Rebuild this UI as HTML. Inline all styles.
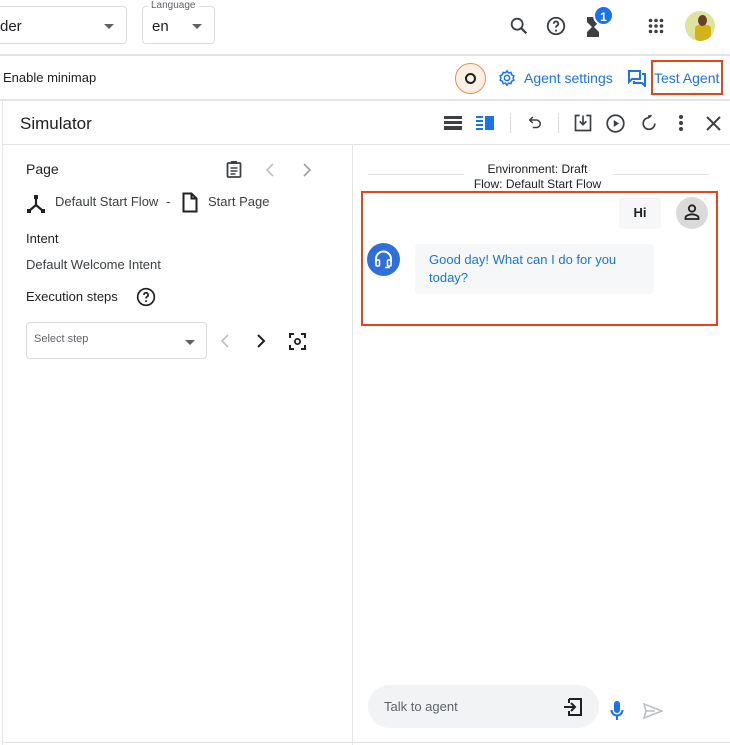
<!DOCTYPE html>
<html><head><style>
*{box-sizing:border-box;margin:0;padding:0}
body{width:730px;height:745px;background:#fff;font-family:"Liberation Sans",Arial,sans-serif;color:#202124;position:relative;overflow:hidden}
.a{position:absolute}
svg{display:block}
</style></head><body>
<!-- top bar -->
<div class="a" style="left:-10px;top:6px;width:137px;height:38px;border:1px solid #dadce0;border-radius:4px"></div>
<div class="a" style="left:0;top:18px;font-size:15px">der</div>
<div class="a" style="left:104px;top:24px;border-left:5px solid transparent;border-right:5px solid transparent;border-top:5px solid #5f6368"></div>
<div class="a" style="left:142px;top:6px;width:73px;height:38px;border:1px solid #dadce0;border-radius:4px"></div>
<div class="a" style="left:148px;top:0;background:#fff;padding:0 3px;font-size:10px;color:#5f6368">Language</div>
<div class="a" style="left:152px;top:18px;font-size:15px">en</div>
<div class="a" style="left:192px;top:24px;border-left:5px solid transparent;border-right:5px solid transparent;border-top:5px solid #5f6368"></div>
<svg class="a" style="left:508px;top:15px" width="22" height="22" viewBox="0 0 24 24"><circle cx="10" cy="10" r="6" fill="none" stroke="#3c4043" stroke-width="2"/><path d="M14.5 14.5L20 20" stroke="#3c4043" stroke-width="2.4"/></svg>
<svg class="a" style="left:545px;top:15px" width="22" height="22" viewBox="0 0 24 24"><circle cx="12" cy="12" r="9" fill="none" stroke="#3c4043" stroke-width="2"/><path d="M9.5 9.5a2.5 2.5 0 1 1 3.5 2.3c-.8.4-1 1-1 2" fill="none" stroke="#3c4043" stroke-width="2"/><circle cx="12" cy="17" r="1.2" fill="#3c4043"/></svg>
<svg class="a" style="left:585px;top:16px" width="16" height="22" viewBox="0 0 16 22"><path d="M2 1h12v5l-5 5 5 5v5H2v-5l5-5-5-5z" fill="#3c4043"/></svg>
<div class="a" style="left:593px;top:5px;width:21px;height:21px;border-radius:50%;background:#1a73e8;color:#fff;font-size:12px;font-weight:bold;text-align:center;line-height:21px;border:2px solid #fff">1</div>
<svg class="a" style="left:648px;top:18px" width="16" height="16" viewBox="0 0 16 16" fill="#3c4043"><circle cx="2.5" cy="2.5" r="1.8"/><circle cx="8" cy="2.5" r="1.8"/><circle cx="13.5" cy="2.5" r="1.8"/><circle cx="2.5" cy="8" r="1.8"/><circle cx="8" cy="8" r="1.8"/><circle cx="13.5" cy="8" r="1.8"/><circle cx="2.5" cy="13.5" r="1.8"/><circle cx="8" cy="13.5" r="1.8"/><circle cx="13.5" cy="13.5" r="1.8"/></svg>
<div class="a" style="left:685px;top:11px;width:30px;height:30px;border-radius:50%;background:#dfe3a0;overflow:hidden"><div style="position:absolute;left:10px;top:14px;width:16px;height:16px;background:#d4b21a;border-radius:4px"></div><div style="position:absolute;left:13px;top:4px;width:9px;height:11px;background:#6b3f2a;border-radius:50%"></div></div>
<div class="a" style="left:0;top:54px;width:730px;height:2px;background:#e3e3e3"></div>
<!-- second bar -->
<div class="a" style="left:3px;top:70px;font-size:13px">Enable minimap</div>
<div class="a" style="left:455px;top:63px;width:31px;height:31px;border-radius:50%;border:1.5px solid #e8914f;background:#fcefe4"></div>
<div class="a" style="left:465px;top:73px;width:11px;height:11px;border-radius:50%;border:2px solid #202124"></div>
<svg class="a" style="left:498px;top:69px" width="18" height="18" viewBox="0 0 24 24"><circle cx="12" cy="12" r="3.5" fill="none" stroke="#1a73e8" stroke-width="2"/><path d="M12 2.5l2 2.6 3.2-.6.9 3.1 3 1.4-1 3 1 3-3 1.4-.9 3.1-3.2-.6-2 2.6-2-2.6-3.2.6-.9-3.1-3-1.4 1-3-1-3 3-1.4.9-3.1 3.2.6z" fill="none" stroke="#1a73e8" stroke-width="2"/></svg>
<div class="a" style="left:524px;top:70px;font-size:14px;color:#1a73e8">Agent settings</div>
<svg class="a" style="left:628px;top:70px" width="18" height="17" viewBox="0 0 18 17"><path d="M1 1h11v8H4l-3 3z" fill="none" stroke="#1a73e8" stroke-width="2"/><path d="M14 4h3v12l-3-3H6v-2" fill="none" stroke="#1a73e8" stroke-width="2"/></svg>
<div class="a" style="left:651px;top:60px;width:72px;height:35px;border:2px solid #e8431b"></div>
<div class="a" style="left:654px;top:70px;font-size:14px;color:#1a73e8">Test Agent</div>
<div class="a" style="left:0;top:99px;width:730px;height:2px;background:#e3e3e3"></div>
<!-- simulator -->
<div class="a" style="left:2px;top:101px;width:1px;height:644px;background:#e3e3e3"></div>
<div class="a" style="left:20px;top:114px;font-size:17px">Simulator</div>
<svg class="a" style="left:444px;top:116px" width="18" height="14" viewBox="0 0 18 14" fill="#3c4043"><rect y="0" width="18" height="3"/><rect y="5" width="18" height="3"/><rect y="10" width="18" height="4"/></svg>
<svg class="a" style="left:476px;top:116px" width="18" height="14" viewBox="0 0 18 14" fill="#1a73e8"><rect y="0" width="7" height="2"/><rect y="4" width="7" height="2"/><rect y="8" width="7" height="2"/><rect y="12" width="7" height="2"/><rect x="9" y="0" width="9" height="14"/></svg>
<div class="a" style="left:510px;top:113px;width:1px;height:20px;background:#ddd"></div>
<svg class="a" style="left:526px;top:114px" width="18" height="18" viewBox="0 0 24 24"><path d="M9 4L5 8l4 4M5 8h9a5 5 0 0 1 0 10H9" fill="none" stroke="#3c4043" stroke-width="2"/></svg>
<div class="a" style="left:558px;top:113px;width:1px;height:20px;background:#ddd"></div>
<svg class="a" style="left:573px;top:113px" width="20" height="20" viewBox="0 0 24 24"><path d="M8 3H3v18h18V3h-5" fill="none" stroke="#3c4043" stroke-width="2"/><path d="M12 3v11M8 10l4 4 4-4" fill="none" stroke="#3c4043" stroke-width="2"/></svg>
<svg class="a" style="left:605px;top:113px" width="21" height="21" viewBox="0 0 24 24"><circle cx="12" cy="12" r="9.5" fill="none" stroke="#3c4043" stroke-width="2"/><path d="M10 8v8l6-4z" fill="#3c4043"/></svg>
<svg class="a" style="left:639px;top:113px" width="20" height="21" viewBox="0 0 24 24"><path d="M12 5a7 7 0 1 0 7 7M12 5l3-3M12 5V2" fill="none" stroke="#3c4043" stroke-width="2"/><path d="M12 5a7 7 0 0 1 0 0" /></svg>
<svg class="a" style="left:678px;top:114px" width="6" height="18" viewBox="0 0 6 18" fill="#3c4043"><circle cx="3" cy="3" r="2"/><circle cx="3" cy="9" r="2"/><circle cx="3" cy="15" r="2"/></svg>
<svg class="a" style="left:706px;top:116px" width="15" height="15" viewBox="0 0 15 15"><path d="M1 1l13 13M14 1L1 14" stroke="#3c4043" stroke-width="2"/></svg>
<div class="a" style="left:3px;top:144px;width:727px;height:1px;background:#e3e3e3"></div>
<div class="a" style="left:352px;top:145px;width:1px;height:600px;background:#e3e3e3"></div>
<!-- left -->
<div class="a" style="left:26px;top:161px;font-size:14px;font-weight:500">Page</div>
<svg class="a" style="left:226px;top:160px" width="16" height="18" viewBox="0 0 16 18"><rect x="1.5" y="3" width="13" height="14" rx="1" fill="none" stroke="#3c4043" stroke-width="1.8"/><rect x="5" y="1" width="6" height="3" fill="#3c4043"/><path d="M4.5 8h7M4.5 11h7M4.5 14h5" stroke="#3c4043" stroke-width="1.5"/></svg>
<svg class="a" style="left:265px;top:163px" width="10" height="14" viewBox="0 0 10 14"><path d="M8 1L2 7l6 6" fill="none" stroke="#bdc1c6" stroke-width="1.6"/></svg>
<svg class="a" style="left:302px;top:163px" width="10" height="14" viewBox="0 0 10 14"><path d="M2 1l6 6-6 6" fill="none" stroke="#9aa0a6" stroke-width="1.6"/></svg>
<svg class="a" style="left:26px;top:194px" width="20" height="20" viewBox="0 0 20 20"><path d="M10 3v8L3 17M10 11l7 6" fill="none" stroke="#202124" stroke-width="2.2"/><rect x="8" y="1" width="4" height="4" fill="#202124"/><rect x="1" y="15" width="4" height="4" fill="#202124"/><rect x="15" y="15" width="4" height="4" fill="#202124"/></svg>
<div class="a" style="left:55px;top:194px;font-size:13px;color:#3c4043">Default Start Flow</div>
<div class="a" style="left:166px;top:194px;font-size:13px;color:#3c4043">-</div>
<svg class="a" style="left:182px;top:192px" width="16" height="21" viewBox="0 0 16 21"><path d="M1.5 1.5h8l5 5v13h-13z" fill="none" stroke="#202124" stroke-width="2"/><path d="M9.5 1.5v5h5" fill="none" stroke="#202124" stroke-width="2"/></svg>
<div class="a" style="left:208px;top:194px;font-size:13px;color:#3c4043">Start Page</div>
<div class="a" style="left:26px;top:231px;font-size:13px;font-weight:500">Intent</div>
<div class="a" style="left:26px;top:257px;font-size:13px;color:#3c4043">Default Welcome Intent</div>
<div class="a" style="left:26px;top:289px;font-size:13px;font-weight:500">Execution steps</div>
<svg class="a" style="left:136px;top:287px" width="20" height="20" viewBox="0 0 24 24"><circle cx="12" cy="12" r="10" fill="none" stroke="#202124" stroke-width="2"/><path d="M9.5 9.5a2.5 2.5 0 1 1 3.5 2.3c-.8.4-1 1-1 2" fill="none" stroke="#202124" stroke-width="2"/><circle cx="12" cy="17" r="1.2" fill="#202124"/></svg>
<div class="a" style="left:26px;top:322px;width:181px;height:37px;border:1px solid #dadce0;border-radius:4px"></div>
<div class="a" style="left:34px;top:333px;font-size:11px;color:#5f6368">Select step</div>
<div class="a" style="left:185px;top:340px;border-left:5px solid transparent;border-right:5px solid transparent;border-top:5px solid #5f6368"></div>
<svg class="a" style="left:220px;top:334px" width="10" height="14" viewBox="0 0 10 14"><path d="M8 1L2 7l6 6" fill="none" stroke="#bdc1c6" stroke-width="1.6"/></svg>
<svg class="a" style="left:256px;top:334px" width="10" height="14" viewBox="0 0 10 14"><path d="M2 1l6 6-6 6" fill="none" stroke="#202124" stroke-width="2"/></svg>
<svg class="a" style="left:289px;top:333px" width="17" height="17" viewBox="0 0 17 17"><path d="M1 5V1h4M12 1h4v4M16 12v4h-4M5 16H1v-4" fill="none" stroke="#202124" stroke-width="2"/><circle cx="8.5" cy="8.5" r="2.6" fill="none" stroke="#202124" stroke-width="1.8"/></svg>
<!-- right -->
<div class="a" style="left:368px;top:174px;width:96px;height:1px;background:#e3e3e3"></div>
<div class="a" style="left:613px;top:174px;width:96px;height:1px;background:#e3e3e3"></div>
<div class="a" style="left:355px;top:162px;width:365px;text-align:center;font-size:12px;color:#202124;line-height:15px">Environment: Draft<br>Flow: Default Start Flow</div>
<div class="a" style="left:361px;top:191px;width:357px;height:135px;border:2px solid #e8431b"></div>
<div class="a" style="left:619px;top:197px;width:42px;height:32px;background:#f6f7f9;border-radius:4px;font-size:13px;font-weight:bold;text-align:center;line-height:32px">Hi</div>
<div class="a" style="left:676px;top:197px;width:32px;height:32px;border-radius:50%;background:#dadada"></div>
<svg class="a" style="left:683px;top:203px" width="18" height="18" viewBox="0 0 18 18"><circle cx="9" cy="5.5" r="3.2" fill="none" stroke="#202124" stroke-width="1.8"/><path d="M2.5 16v-1.5c0-2 4-3.2 6.5-3.2s6.5 1.2 6.5 3.2V16z" fill="none" stroke="#202124" stroke-width="1.8"/></svg>
<div class="a" style="left:367px;top:243px;width:33px;height:33px;border-radius:50%;background:#2f6fd8"></div>
<svg class="a" style="left:373px;top:249px" width="21" height="21" viewBox="0 0 21 21"><path d="M3 13V10a7.5 7.5 0 0 1 15 0v3" fill="none" stroke="#fff" stroke-width="2"/><rect x="3" y="11" width="3.5" height="6" rx="1" fill="none" stroke="#fff" stroke-width="1.6"/><rect x="14.5" y="11" width="3.5" height="6" rx="1" fill="none" stroke="#fff" stroke-width="1.6"/><path d="M16 17v1.5h-4" stroke="#fff" stroke-width="1.5" fill="none"/></svg>
<div class="a" style="left:415px;top:244px;width:239px;height:50px;background:#f6f7f9;border-radius:4px"></div>
<div class="a" style="left:429px;top:251px;font-size:13px;color:#1a73e8;line-height:18px">Good day! What can I do for you<br>today?</div>
<div class="a" style="left:368px;top:685px;width:231px;height:43px;background:#f1f3f4;border-radius:22px"></div>
<div class="a" style="left:384px;top:699px;font-size:13px;color:#5f6368">Talk to agent</div>
<svg class="a" style="left:563px;top:698px" width="20" height="18" viewBox="0 0 20 18"><path d="M6 1h12v16H6v-4M6 1v4" fill="none" stroke="#202124" stroke-width="2"/><path d="M1 9h11M8 5l4 4-4 4" fill="none" stroke="#202124" stroke-width="2"/></svg>
<svg class="a" style="left:610px;top:700px" width="14" height="22" viewBox="0 0 14 22"><rect x="4" y="1" width="6" height="12" rx="3" fill="#1a73e8"/><path d="M1.5 10a5.5 5.5 0 0 0 11 0M7 15.5V20" fill="none" stroke="#1a73e8" stroke-width="2"/></svg>
<svg class="a" style="left:643px;top:703px" width="20" height="16" viewBox="0 0 20 16"><path d="M1 1l18 7-18 7 2-7z M3 8h9" fill="none" stroke="#bdc1c6" stroke-width="1.6"/></svg>
<div class="a" style="left:3px;top:742px;width:727px;height:1px;background:#e3e3e3"></div>
</body></html>
